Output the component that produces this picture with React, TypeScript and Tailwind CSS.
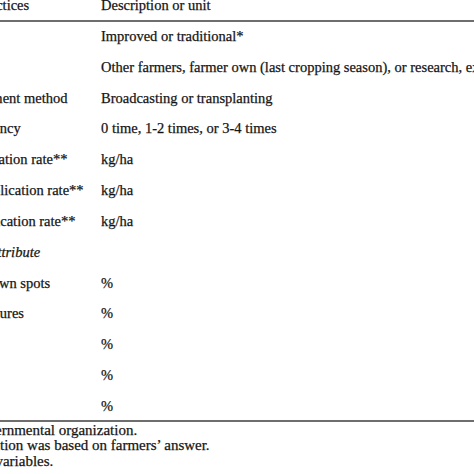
import React from "react";

type Row = { label: string; value: string; italic?: boolean };

const rows: Row[] = [
  { label: "Variety", value: "Improved or traditional*" },
  { label: "Seed source", value: "Other farmers, farmer own (last cropping season), or research, extension" },
  { label: "Crop establishment method", value: "Broadcasting or transplanting" },
  { label: "Weeding frequency", value: "0 time, 1-2 times, or 3-4 times" },
  { label: "Nitrogen application rate**", value: "kg/ha" },
  { label: "Phosphorus application rate**", value: "kg/ha" },
  { label: "Potassium application rate**", value: "kg/ha" },
  { label: "Grain quality attribute", value: "", italic: true },
  { label: "Grains with brown spots", value: "%" },
  { label: "Grains with fissures", value: "%" },
  { label: "Chalkiness", value: "%" },
  { label: "Broken grains", value: "%" },
  { label: "Impurities", value: "%" },
];

export default function App() {
  return (
    <div className="w-[474px] h-[474px] overflow-hidden bg-white text-[#111111] [-webkit-text-stroke:0.25px_#222222] [font-family:'Liberation_Serif',serif]">
      <div className="ml-[-92px] w-[700px]">
        <div className="flex h-[20px] text-[14.5px] leading-[10px] whitespace-nowrap">
          <div className="w-[193px] shrink-0">Agronomic practices</div>
          <div>Description or unit</div>
        </div>
        <div className="h-[2px] bg-[#6e6e6e]" />
        <div className="-mt-[1px]">
          {rows.map((r, i) => (
            <div key={i} className="flex h-[30.83px] text-[14.5px] leading-[30.83px] whitespace-nowrap">
              <div className={`w-[193px] shrink-0 overflow-hidden ${r.italic ? "italic" : ""}`}>{r.label}</div>
              <div>{r.value}</div>
            </div>
          ))}
        </div>
        <div className="-mt-[2px] h-[2px] bg-[#6e6e6e]" />
        <div className="mt-[1px] ml-[1.6px] text-[15px] leading-[15.5px] whitespace-nowrap">
          <div>NGO: nongovernmental organization.</div>
          <div>*The classification was based on farmers’ answer.</div>
          <div>** Numerical variables.</div>
        </div>
      </div>
    </div>
  );
}
